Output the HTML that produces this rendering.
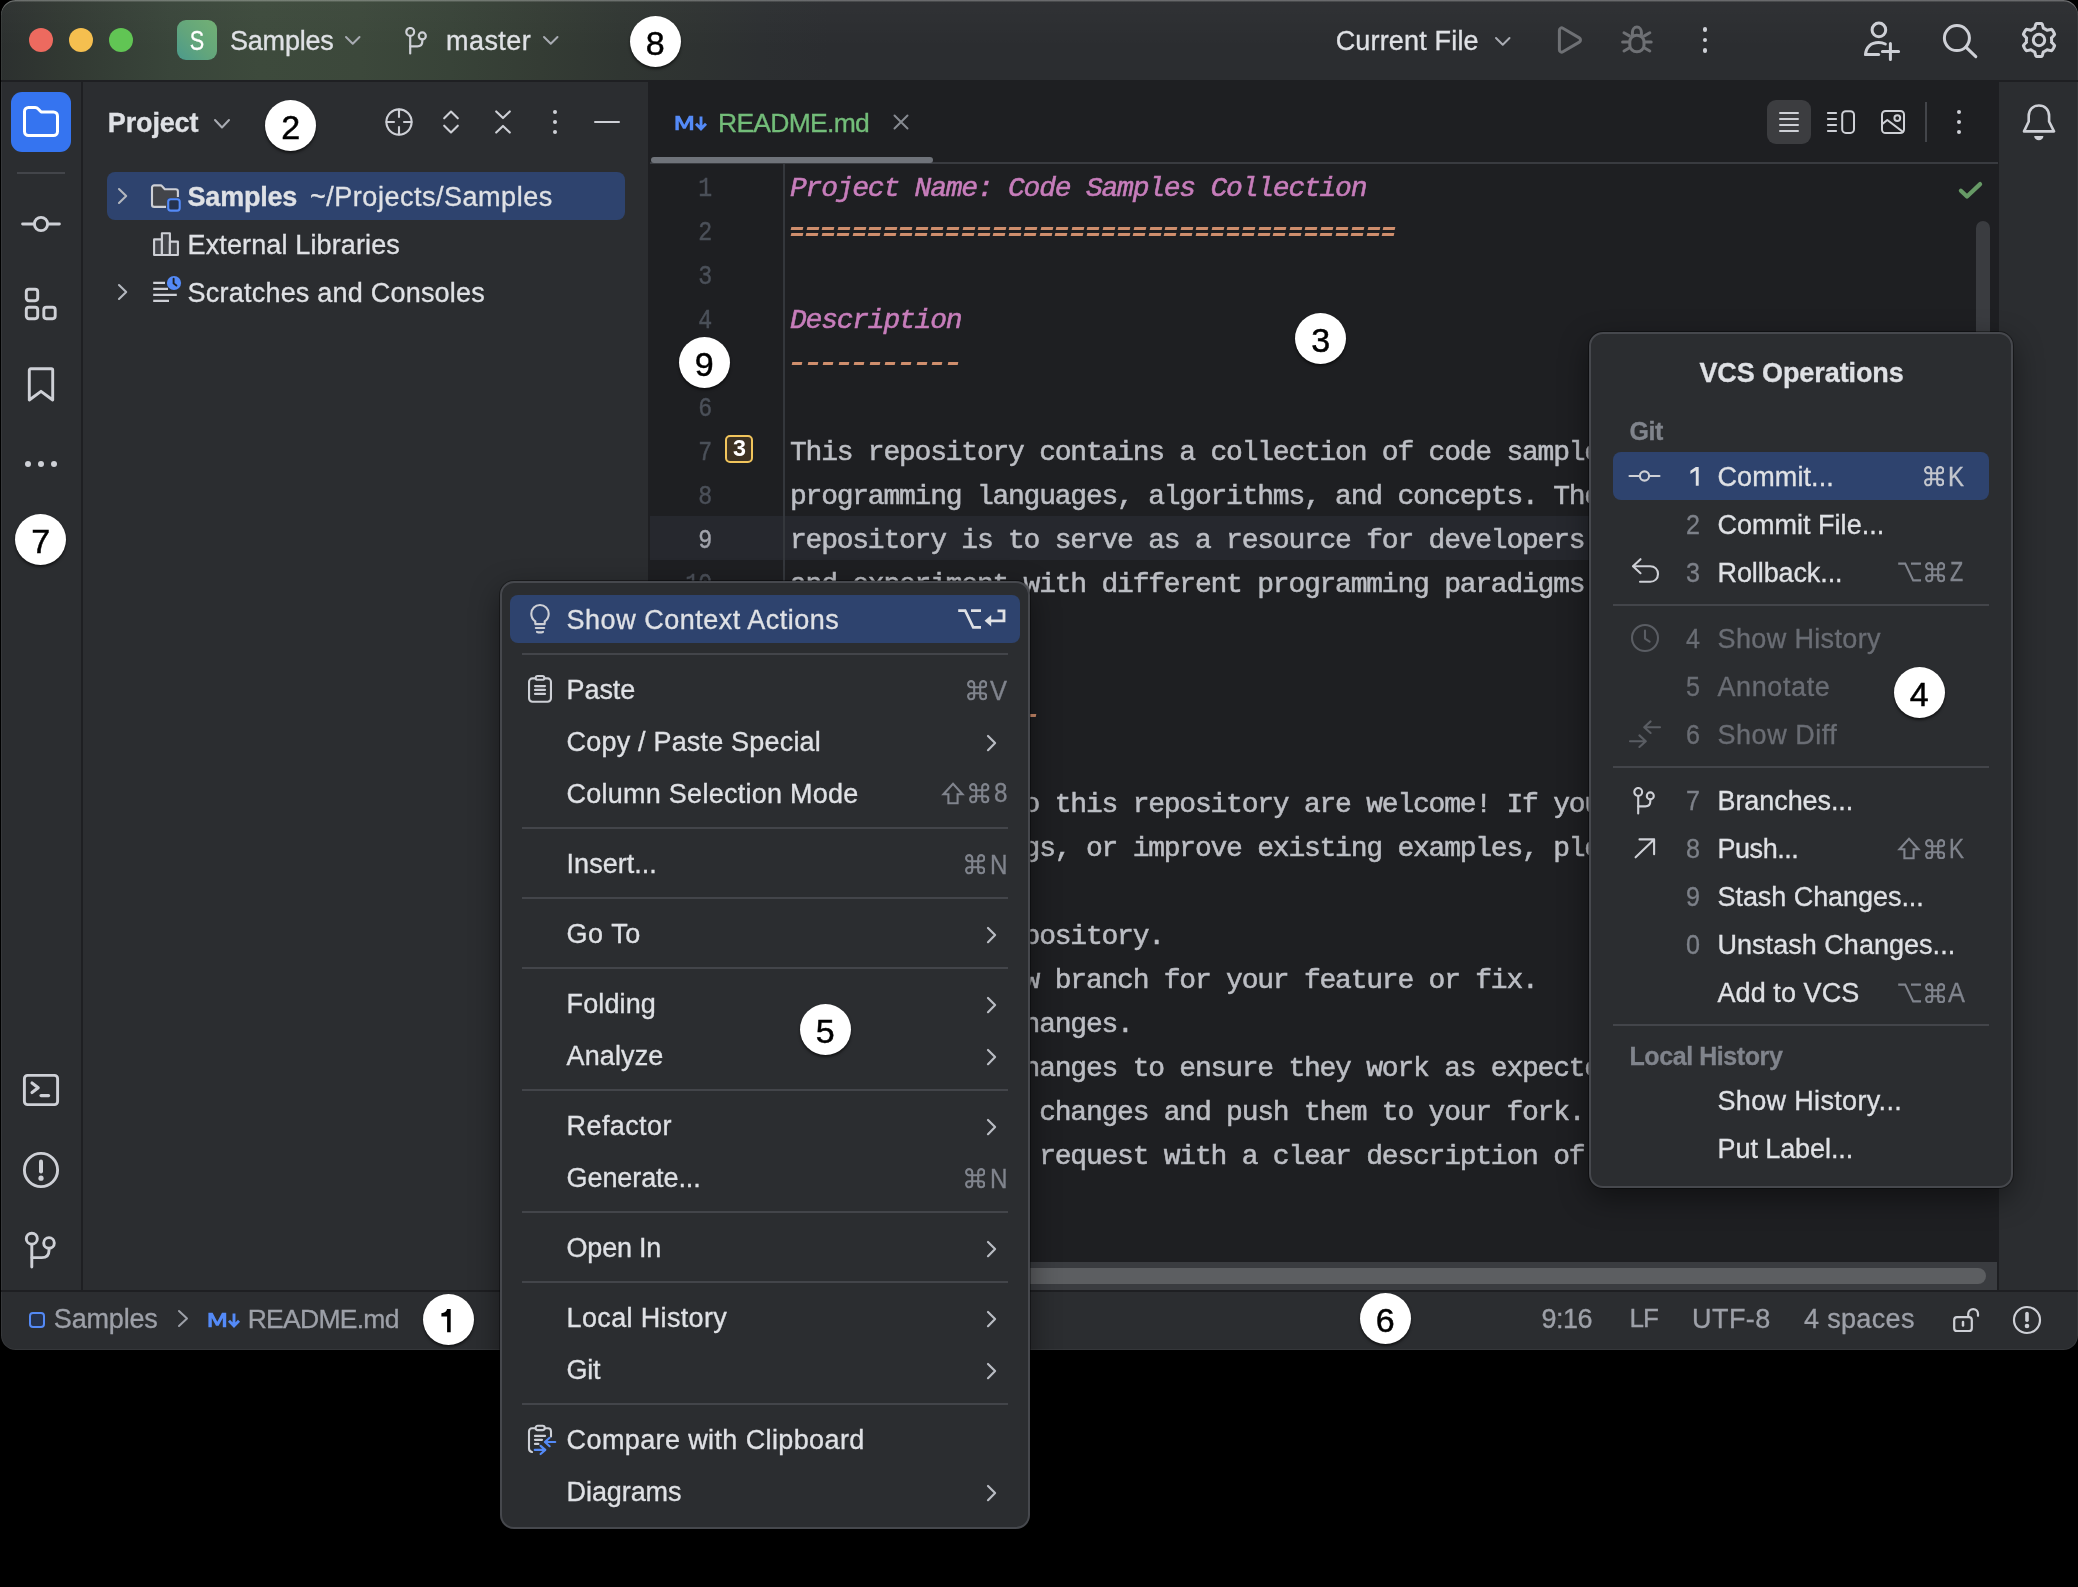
<!DOCTYPE html>
<html lang="en"><head><meta charset="utf-8"><title>Samples – README.md</title>
<style>
html,body{margin:0;padding:0;background:#000;}
body{width:2078px;height:1587px;position:relative;overflow:hidden;font-family:"Liberation Sans",sans-serif;color:#dfe1e5;-webkit-font-smoothing:antialiased;}
#root{position:absolute;left:0;top:0;width:2078px;height:1587px;will-change:transform;}
.a{position:absolute;display:block;}
.t{white-space:pre;}
.s{font-family:"Liberation Sans",sans-serif;}
.m{font-family:"Liberation Mono",monospace;}
.cl{font-size:28px;letter-spacing:-1.228px;height:44px;line-height:44px;-webkit-text-stroke:0.55px currentColor;}
.ln{font-size:27px;letter-spacing:-1px;height:44px;line-height:44px;-webkit-text-stroke:0.45px currentColor;transform:scaleX(0.86);transform-origin:100% 50%;}
.s{-webkit-text-stroke:0.32px currentColor;}
.pop{background:#2b2d30;border:2px solid #46484d;border-radius:14px;box-sizing:border-box;box-shadow:0 10px 30px rgba(0,0,0,0.45),0 0 0 1px rgba(0,0,0,0.35);}
.bd{background:#fff;border-radius:50%;box-shadow:0 2px 3px rgba(0,0,0,0.6);width:51px;height:51px;color:#000;font-size:34px;line-height:54.5px;-webkit-text-stroke:0.5px #000;text-align:center;}
</style></head>
<body>
<div id="root">
<div class="a " style="left:0px;top:0px;width:2078px;height:1350px;background:#2b2d30;"></div>
<div class="a" style="left:0;top:0;width:2078px;height:80px;background:linear-gradient(180deg,rgba(255,255,255,0.025) 0%,rgba(255,255,255,0) 60%),linear-gradient(90deg,#2c302f 0px,#313832 60px,#39453a 170px,#3d4a3c 260px,#3c483b 360px,#384338 450px,#343c34 540px,#303632 620px,#2e3231 700px,#2c2f31 760px,#2b2d30 830px);"></div>
<div class="a" style="left:1px;top:0;width:2077px;height:1350px;border-radius:14.5px;box-shadow:inset 0 1.6px 0 rgba(255,255,255,0.24),inset 0 0 0 1px rgba(255,255,255,0.05);"></div>
<div class="a " style="left:0px;top:80px;width:2078px;height:2px;background:#1e1f22;"></div>
<div class="a " style="left:81px;top:82px;width:2px;height:1208px;background:#1e1f22;"></div>
<div class="a " style="left:648px;top:82px;width:1350px;height:1208px;background:#1e1f22;"></div>
<div class="a " style="left:1997px;top:82px;width:2px;height:1208px;background:#1e1f22;"></div>
<div class="a " style="left:0px;top:1290px;width:2078px;height:2px;background:#1e1f22;"></div>
<div class="a " style="left:29px;top:28px;width:24px;height:24px;background:#ed6a5f;border-radius:12px;"></div>
<div class="a " style="left:69px;top:28px;width:24px;height:24px;background:#f5bf4f;border-radius:12px;"></div>
<div class="a " style="left:109px;top:28px;width:24px;height:24px;background:#61c554;border-radius:12px;"></div>
<div class="a " style="left:177px;top:20px;width:40px;height:40px;background:linear-gradient(45deg,#4b9a8c 0%,#62a57c 45%,#73b074 100%);border-radius:9px;"></div>
<span id="t0" class="a t s" style="left:188.0px;top:21.3px;height:40px;line-height:40px;font-size:27px;color:#ffffff;transform:scaleX(0.8);transform-origin:9px 50%;">S</span>
<span id="t1" class="a t s" style="left:230px;top:21.3px;height:40px;line-height:40px;font-size:27px;color:#dfe1e5;letter-spacing:-0.208px;">Samples</span>
<svg class="a" style="left:344.45px;top:34.9px;" width="17.5" height="10.8" viewBox="0 0 17.5 10.8" fill="none"><path d="M2 2L8.75 8.8L15.5 2" stroke="#a9acb3" stroke-width="2" stroke-linecap="round" stroke-linejoin="round"/></svg>
<svg class="a" style="left:405px;top:27px;" width="24.0" height="28.0" viewBox="0 0 24 28" fill="none"><g stroke="#ced0d6" stroke-width="2.2" stroke-linecap="round" fill="none"><circle cx="5.2" cy="4.9" r="3.9"/><circle cx="17.3" cy="8.9" r="3.5"/><path d="M5.2 9V26.4"/><path d="M17.3 12.6V14.6C17.3 17.8 15.6 19.4 12.3 19.4H5.4"/></g></svg>
<span id="t2" class="a t s" style="left:446px;top:21.3px;height:40px;line-height:40px;font-size:27px;color:#dfe1e5;letter-spacing:0.454px;">master</span>
<svg class="a" style="left:542.45px;top:34.9px;" width="17.5" height="10.8" viewBox="0 0 17.5 10.8" fill="none"><path d="M2 2L8.75 8.8L15.5 2" stroke="#a9acb3" stroke-width="2" stroke-linecap="round" stroke-linejoin="round"/></svg>
<span id="t3" class="a t s" style="left:1335.7px;top:21.3px;height:40px;line-height:40px;font-size:27px;color:#dfe1e5;letter-spacing:0.168px;">Current File</span>
<svg class="a" style="left:1494.15px;top:35.800000000000004px;" width="17.5" height="10.8" viewBox="0 0 17.5 10.8" fill="none"><path d="M2 2L8.75 8.8L15.5 2" stroke="#a9acb3" stroke-width="2" stroke-linecap="round" stroke-linejoin="round"/></svg>
<svg class="a" style="left:1554px;top:22px;" width="34" height="36" viewBox="0 0 34 36" fill="none"><path d="M5.4 8.2C5.4 6.4 7.3 5.3 8.9 6.2L25.3 15.9C26.9 16.8 26.9 19.2 25.3 20.1L8.9 29.8C7.3 30.7 5.4 29.6 5.4 27.8Z" stroke="#6e7074" stroke-width="3" stroke-linejoin="round"/></svg>
<svg class="a" style="left:1619px;top:22px;" width="36" height="36" viewBox="0 0 36 36" fill="none"><g stroke="#6e7074" stroke-width="3" stroke-linecap="round" fill="none"><rect x="10.8" y="13.2" width="14.2" height="16.6" rx="7.1" ry="6.6"/><path d="M13.4 13.2V10.6C13.4 7.4 15.3 5.1 17.9 5.1C20.5 5.1 22.4 7.4 22.4 10.6V13.2"/><path d="M5 10.8L10.4 13.9M3.6 20H10.6M5 29L10.6 25.8M30.8 10.8L25.4 13.9M32.2 20H25.2M30.8 29L25.2 25.8"/></g></svg>
<div class="a " style="left:1702.6px;top:26.8px;width:4.8px;height:4.8px;background:#ced0d6;border-radius:3px;"></div>
<div class="a " style="left:1702.6px;top:37.6px;width:4.8px;height:4.8px;background:#ced0d6;border-radius:3px;"></div>
<div class="a " style="left:1702.6px;top:48.300000000000004px;width:4.8px;height:4.8px;background:#ced0d6;border-radius:3px;"></div>
<svg class="a" style="left:1862px;top:20px;" width="40" height="42" viewBox="0 0 40 42" fill="none"><g stroke="#ced0d6" stroke-width="3" stroke-linecap="round" fill="none"><circle cx="16.9" cy="9.9" r="6.8"/><path d="M3.6 34.5C3.9 27.3 8.8 22.6 16.6 22.6C19.2 22.6 21.4 23.1 23.3 24"/><path d="M3.6 34.5H16.6"/><path d="M28.4 23.6V39.6M20.4 31.5H36.6"/></g></svg>
<svg class="a" style="left:1940px;top:22px;" width="40" height="40" viewBox="0 0 40 40" fill="none"><g stroke="#ced0d6" stroke-width="3" stroke-linecap="round" fill="none"><circle cx="16.9" cy="16.1" r="12.5"/><path d="M25.9 25.2L35.8 34.6"/></g></svg>
<svg class="a" style="left:2018px;top:20px;" width="42" height="40" viewBox="0 0 42 40" fill="none"><g stroke="#ced0d6" stroke-width="3" stroke-linejoin="round" fill="none"><path d="M21.00 3.40 L21.72 3.42 L22.45 3.46 L23.17 3.54 L23.88 3.65 L24.38 4.74 L24.78 5.90 L25.08 7.06 L25.31 8.16 L25.82 8.36 L26.32 8.58 L26.82 8.82 L27.30 9.09 L27.77 9.37 L28.23 9.68 L28.67 10.00 L29.10 10.35 L30.16 10.00 L31.32 9.68 L32.53 9.44 L33.72 9.33 L34.17 9.89 L34.60 10.48 L35.00 11.08 L35.38 11.70 L35.72 12.33 L36.04 12.98 L36.34 13.65 L36.60 14.32 L35.91 15.30 L35.10 16.22 L34.24 17.06 L33.41 17.81 L33.49 18.36 L33.55 18.90 L33.59 19.45 L33.60 20.00 L33.59 20.55 L33.55 21.10 L33.49 21.64 L33.41 22.19 L34.24 22.94 L35.10 23.78 L35.91 24.70 L36.60 25.68 L36.34 26.35 L36.04 27.02 L35.72 27.67 L35.38 28.30 L35.00 28.92 L34.60 29.52 L34.17 30.11 L33.72 30.67 L32.53 30.56 L31.32 30.32 L30.16 30.00 L29.10 29.65 L28.67 30.00 L28.23 30.32 L27.77 30.63 L27.30 30.91 L26.82 31.18 L26.32 31.42 L25.82 31.64 L25.31 31.84 L25.08 32.94 L24.78 34.10 L24.38 35.26 L23.88 36.35 L23.17 36.46 L22.45 36.54 L21.72 36.58 L21.00 36.60 L20.28 36.58 L19.55 36.54 L18.83 36.46 L18.12 36.35 L17.62 35.26 L17.22 34.10 L16.92 32.94 L16.69 31.84 L16.18 31.64 L15.68 31.42 L15.18 31.18 L14.70 30.91 L14.23 30.63 L13.77 30.32 L13.33 30.00 L12.90 29.65 L11.84 30.00 L10.68 30.32 L9.47 30.56 L8.28 30.67 L7.83 30.11 L7.40 29.52 L7.00 28.92 L6.62 28.30 L6.28 27.67 L5.96 27.02 L5.66 26.35 L5.40 25.68 L6.09 24.70 L6.90 23.78 L7.76 22.94 L8.59 22.19 L8.51 21.64 L8.45 21.10 L8.41 20.55 L8.40 20.00 L8.41 19.45 L8.45 18.90 L8.51 18.36 L8.59 17.81 L7.76 17.06 L6.90 16.22 L6.09 15.30 L5.40 14.32 L5.66 13.65 L5.96 12.98 L6.28 12.33 L6.62 11.70 L7.00 11.08 L7.40 10.48 L7.83 9.89 L8.28 9.33 L9.47 9.44 L10.68 9.68 L11.84 10.00 L12.90 10.35 L13.33 10.00 L13.77 9.68 L14.23 9.37 L14.70 9.09 L15.18 8.82 L15.68 8.58 L16.18 8.36 L16.69 8.16 L16.92 7.06 L17.22 5.90 L17.62 4.74 L18.12 3.65 L18.83 3.54 L19.55 3.46 L20.28 3.42Z"/><circle cx="21" cy="20" r="5.7"/></g></svg>
<div class="a " style="left:11px;top:92px;width:60px;height:60px;background:#3574f0;border-radius:11px;"></div>
<svg class="a" style="left:21px;top:104px;" width="40" height="36" viewBox="0 0 40 36" fill="none"><path d="M3.5 7.5C3.5 5.3 5.3 3.5 7.5 3.5H14.2C15.3 3.5 16.3 3.9 17 4.7L20.2 8H32.5C34.7 8 36.5 9.8 36.5 12V27.5C36.5 29.7 34.7 31.5 32.5 31.5H7.5C5.3 31.5 3.5 29.7 3.5 27.5Z" stroke="#ffffff" stroke-width="3" stroke-linejoin="round"/></svg>
<div class="a " style="left:17px;top:172px;width:48px;height:2px;background:#43454a;"></div>
<svg class="a" style="left:18px;top:212px;" width="46" height="24" viewBox="0 0 46 24" fill="none"><g stroke="#ced0d6" stroke-width="2.9" stroke-linecap="round" fill="none"><circle cx="23" cy="12" r="6.6"/><path d="M4.6 12H16M30 12H41.4"/></g></svg>
<svg class="a" style="left:22px;top:286px;" width="38" height="36" viewBox="0 0 38 36" fill="none"><g stroke="#ced0d6" stroke-width="2.9" fill="none"><rect x="4.3" y="3.3" width="11.4" height="11.4" rx="2.6"/><rect x="4.3" y="21.3" width="11.4" height="11.4" rx="2.6"/><rect x="21.8" y="21.3" width="11.4" height="11.4" rx="2.6"/></g></svg>
<svg class="a" style="left:24px;top:365px;" width="34" height="40" viewBox="0 0 34 40" fill="none"><path d="M5.3 5.2C5.3 4.4 5.9 3.8 6.7 3.8H27.3C28.1 3.8 28.7 4.4 28.7 5.2V35L17 26.3L5.3 35Z" stroke="#ced0d6" stroke-width="2.9" stroke-linejoin="round" fill="none"/></svg>
<div class="a " style="left:25px;top:461px;width:6px;height:6px;background:#ced0d6;border-radius:3px;"></div>
<div class="a " style="left:38px;top:461px;width:6px;height:6px;background:#ced0d6;border-radius:3px;"></div>
<div class="a " style="left:51px;top:461px;width:6px;height:6px;background:#ced0d6;border-radius:3px;"></div>
<svg class="a" style="left:20px;top:1070px;" width="42" height="40" viewBox="0 0 42 40" fill="none"><g stroke="#ced0d6" stroke-width="2.9" stroke-linecap="round" stroke-linejoin="round" fill="none"><rect x="4.4" y="5.4" width="33.2" height="29.2" rx="3.2"/><path d="M12 13L18.2 17.8L12 22.6" stroke-width="3.1"/><path d="M21 25.6H28.6" stroke-width="3.1"/></g></svg>
<svg class="a" style="left:20px;top:1149px;" width="42" height="42" viewBox="0 0 42 42" fill="none"><g stroke="#ced0d6" stroke-width="2.9" stroke-linecap="round" fill="none"><circle cx="21" cy="21" r="16.6"/><path d="M21 12.6V22.4" stroke-width="4"/></g><circle cx="21" cy="29.2" r="2.6" fill="#ced0d6"/></svg>
<svg class="a" style="left:22px;top:1230px;" width="38" height="40" viewBox="0 0 38 40" fill="none"><g stroke="#ced0d6" stroke-width="2.9" stroke-linecap="round" fill="none"><circle cx="9.8" cy="8.7" r="5.5"/><circle cx="27" cy="12.9" r="5.3"/><path d="M9.8 14.4V37"/><path d="M27 18.4V20.4C27 25 24.4 27.6 19.8 27.6H10"/></g></svg>
<span id="t4" class="a t s" style="left:107.8px;top:103.0px;height:40px;line-height:40px;font-size:27px;color:#dfe1e5;font-weight:700;letter-spacing:-0.141px;">Project</span>
<svg class="a" style="left:212.5px;top:118.45px;" width="18" height="11.5" viewBox="0 0 18 11.5" fill="none"><path d="M2 2L9.0 9.5L16 2" stroke="#a9acb3" stroke-width="2" stroke-linecap="round" stroke-linejoin="round"/></svg>
<svg class="a" style="left:383px;top:106px;" width="32" height="32" viewBox="0 0 32 32" fill="none"><g stroke="#ced0d6" stroke-width="2.1" stroke-linecap="round" fill="none"><circle cx="16" cy="16" r="12.6"/><path d="M16 3.5V11M16 21V28.5M3.5 16H11M21 16H28.5"/></g></svg>
<svg class="a" style="left:438px;top:106px;" width="26" height="32" viewBox="0 0 26 32" fill="none"><g stroke="#ced0d6" stroke-width="2.1" stroke-linecap="round" stroke-linejoin="round" fill="none"><path d="M6.2 12.3L13 5.6L19.8 12.3"/><path d="M6.2 19.7L13 26.4L19.8 19.7"/></g></svg>
<svg class="a" style="left:490px;top:106px;" width="26" height="32" viewBox="0 0 26 32" fill="none"><g stroke="#ced0d6" stroke-width="2.1" stroke-linecap="round" stroke-linejoin="round" fill="none"><path d="M6.2 5.4L13 12.1L19.8 5.4"/><path d="M6.2 26.6L13 19.9L19.8 26.6"/></g></svg>
<div class="a " style="left:552.5px;top:109.8px;width:4.4px;height:4.4px;background:#ced0d6;border-radius:3px;"></div>
<div class="a " style="left:552.5px;top:119.8px;width:4.4px;height:4.4px;background:#ced0d6;border-radius:3px;"></div>
<div class="a " style="left:552.5px;top:129.8px;width:4.4px;height:4.4px;background:#ced0d6;border-radius:3px;"></div>
<div class="a " style="left:594px;top:121px;width:26px;height:2.2px;background:#ced0d6;border-radius:1px;"></div>
<div class="a " style="left:107px;top:172px;width:518px;height:48px;background:#2e436e;border-radius:8px;"></div>
<svg class="a" style="left:116.9px;top:186.9px;" width="11.2" height="18" viewBox="0 0 11.2 18" fill="none"><path d="M2 2L9.2 9.0L2 16" stroke="#b4b8bf" stroke-width="2.1" stroke-linecap="round" stroke-linejoin="round"/></svg>
<svg class="a" style="left:148px;top:182px;" width="36" height="32" viewBox="0 0 36 32" fill="none"><path d="M4 5.6C4 4.4 5 3.4 6.2 3.4H12.4C13.1 3.4 13.7 3.7 14.1 4.2L16.8 7.2H27.7C28.9 7.2 29.9 8.2 29.9 9.4V16H19V24.9H6.2C5 24.9 4 23.9 4 22.7Z" fill="#43454a"/><path d="M29.9 15V9.4C29.9 8.2 28.9 7.2 27.7 7.2H16.8L14.1 4.2C13.7 3.7 13.1 3.4 12.4 3.4H6.2C5 3.4 4 4.4 4 5.6V22.7C4 23.9 5 24.9 6.2 24.9H18" stroke="#ced0d6" stroke-width="2.1" stroke-linejoin="round" fill="none"/><rect x="20.2" y="17.2" width="11.5" height="11.4" rx="2.6" fill="#25324d" stroke="#548af7" stroke-width="2.1"/></svg>
<span id="t5" class="a t s" style="left:187.6px;top:177.0px;height:40px;line-height:40px;font-size:27px;color:#dfe1e5;font-weight:700;letter-spacing:-0.244px;">Samples</span>
<span id="t6" class="a t s" style="left:310px;top:177.0px;height:40px;line-height:40px;font-size:27px;color:#dfe1e5;letter-spacing:0.520px;">~/Projects/Samples</span>
<svg class="a" style="left:150px;top:230px;" width="32" height="30" viewBox="0 0 32 30" fill="none"><g stroke="#ced0d6" stroke-width="2.1" stroke-linejoin="round" fill="#43454a"><rect x="4.1" y="9.4" width="7.8" height="15.6"/><rect x="11.9" y="3.2" width="8" height="21.8"/><rect x="19.9" y="11.6" width="8" height="13.4"/></g></svg>
<span id="t7" class="a t s" style="left:187.6px;top:225.0px;height:40px;line-height:40px;font-size:27px;color:#dfe1e5;letter-spacing:0.124px;">External Libraries</span>
<svg class="a" style="left:116.9px;top:282.9px;" width="11.2" height="18" viewBox="0 0 11.2 18" fill="none"><path d="M2 2L9.2 9.0L2 16" stroke="#b4b8bf" stroke-width="2.1" stroke-linecap="round" stroke-linejoin="round"/></svg>
<svg class="a" style="left:150px;top:274px;" width="34" height="32" viewBox="0 0 34 32" fill="none"><g stroke="#ced0d6" stroke-width="2.2" fill="none"><path d="M3.2 8.8H15M3.2 14.9H18M3.2 20.9H26.8M3.2 26.9H19"/></g><circle cx="24" cy="9" r="7.1" fill="#548af7"/><path d="M23.6 4.8V9.4L26.4 11.6" stroke="#1e1f22" stroke-width="1.9" stroke-linecap="round" fill="none"/></svg>
<span id="t8" class="a t s" style="left:187.6px;top:273.0px;height:40px;line-height:40px;font-size:27px;color:#dfe1e5;letter-spacing:0.216px;">Scratches and Consoles</span>
<svg class="a" style="left:675px;top:115.0px;" width="33.0" height="16.0" viewBox="0 0 33 16" fill="none"><path d="M0.4 15.2V0.8H4.6L9.3 9.8L14 0.8H18.2V15.2H14.8V5.9L10.6 13.7H8L3.8 5.9V15.2Z" fill="#548af7"/><path d="M26 1.6V13.6M21 8.8L26 13.9L31 8.8" stroke="#548af7" stroke-width="2.9" stroke-linecap="butt" stroke-linejoin="miter" fill="none"/></svg>
<span id="t9" class="a t s" style="left:718px;top:102.5px;height:40px;line-height:40px;font-size:26.5px;color:#73bd79;letter-spacing:-0.720px;">README.md</span>
<svg class="a" style="left:891px;top:112px;" width="20" height="20" viewBox="0 0 20 20" fill="none"><path d="M3.5 3.5L16.5 16.5M16.5 3.5L3.5 16.5" stroke="#868a91" stroke-width="2" stroke-linecap="round"/></svg>
<div class="a " style="left:650px;top:162px;width:1348px;height:2px;background:#393b40;"></div>
<div class="a " style="left:651px;top:157px;width:282px;height:6px;background:#6f737a;border-radius:3px;"></div>
<div class="a " style="left:1767px;top:100px;width:44px;height:44px;background:#3c3d40;border-radius:9px;"></div>
<svg class="a" style="left:1773px;top:106px;" width="32" height="32" viewBox="0 0 32 32" fill="none"><path d="M7 7H25M7 13H25M7 19H25M7 25H25" stroke="#ced0d6" stroke-width="2" stroke-linecap="round"/></svg>
<svg class="a" style="left:1825px;top:106px;" width="32" height="32" viewBox="0 0 32 32" fill="none"><g stroke="#ced0d6" stroke-width="2" stroke-linecap="round" fill="none"><path d="M2.9 7H11.1M2.9 13H11.1M2.9 19H11.1M2.9 25H11.1"/><rect x="17.2" y="5.2" width="11.8" height="21.7" rx="3.6"/></g></svg>
<svg class="a" style="left:1877px;top:106px;" width="32" height="32" viewBox="0 0 32 32" fill="none"><g stroke="#ced0d6" stroke-width="2" stroke-linejoin="round" fill="none"><rect x="5" y="5" width="22" height="22" rx="3.6"/><circle cx="20.3" cy="12.1" r="2.9"/><path d="M5.4 18L10.3 14L26.6 26.4"/></g></svg>
<div class="a " style="left:1925px;top:102px;width:2px;height:40px;background:#43454a;"></div>
<div class="a " style="left:1956.8px;top:109.6px;width:4.4px;height:4.4px;background:#ced0d6;border-radius:3px;"></div>
<div class="a " style="left:1956.8px;top:119.8px;width:4.4px;height:4.4px;background:#ced0d6;border-radius:3px;"></div>
<div class="a " style="left:1956.8px;top:129.9px;width:4.4px;height:4.4px;background:#ced0d6;border-radius:3px;"></div>
<svg class="a" style="left:2018px;top:100px;" width="42" height="44" viewBox="0 0 42 44" fill="none"><g stroke="#ced0d6" stroke-width="2.6" stroke-linecap="round" stroke-linejoin="round" fill="none"><path d="M6 31.4L10.7 21.5V16C10.7 9.6 15 5.5 20.9 5.5C26.8 5.5 31.1 9.6 31.1 16V21.5L36 31.4Z"/></g><path d="M16.2 36H25.4A4.6 4.3 0 0 1 16.2 36Z" fill="#ced0d6"/></svg>
<div class="a " style="left:650px;top:516px;width:1348px;height:44px;background:#26282e;"></div>
<div class="a " style="left:783px;top:164px;width:2px;height:1098px;background:#34373c;"></div>
<div class="a" style="left:650px;top:164px;width:1348px;height:1098px;overflow:hidden;">
<span class="a t m ln" style="right:1287px;top:2.5px;color:#4b5059;">1</span>
<span class="a t m cl" style="left:140px;top:2.5px;color:#c77dbb;font-style:italic;">Project Name: Code Samples Collection</span>
<span class="a t m ln" style="right:1287px;top:46.5px;color:#4b5059;">2</span>
<i class="a" style="left:141.30px;top:62.80px;width:11.6px;height:3px;background:#cf8e6d;transform:skewX(-12deg);"></i>
<i class="a" style="left:156.88px;top:62.80px;width:11.6px;height:3px;background:#cf8e6d;transform:skewX(-12deg);"></i>
<i class="a" style="left:172.45px;top:62.80px;width:11.6px;height:3px;background:#cf8e6d;transform:skewX(-12deg);"></i>
<i class="a" style="left:188.03px;top:62.80px;width:11.6px;height:3px;background:#cf8e6d;transform:skewX(-12deg);"></i>
<i class="a" style="left:203.60px;top:62.80px;width:11.6px;height:3px;background:#cf8e6d;transform:skewX(-12deg);"></i>
<i class="a" style="left:219.18px;top:62.80px;width:11.6px;height:3px;background:#cf8e6d;transform:skewX(-12deg);"></i>
<i class="a" style="left:234.75px;top:62.80px;width:11.6px;height:3px;background:#cf8e6d;transform:skewX(-12deg);"></i>
<i class="a" style="left:250.32px;top:62.80px;width:11.6px;height:3px;background:#cf8e6d;transform:skewX(-12deg);"></i>
<i class="a" style="left:265.90px;top:62.80px;width:11.6px;height:3px;background:#cf8e6d;transform:skewX(-12deg);"></i>
<i class="a" style="left:281.48px;top:62.80px;width:11.6px;height:3px;background:#cf8e6d;transform:skewX(-12deg);"></i>
<i class="a" style="left:297.05px;top:62.80px;width:11.6px;height:3px;background:#cf8e6d;transform:skewX(-12deg);"></i>
<i class="a" style="left:312.62px;top:62.80px;width:11.6px;height:3px;background:#cf8e6d;transform:skewX(-12deg);"></i>
<i class="a" style="left:328.20px;top:62.80px;width:11.6px;height:3px;background:#cf8e6d;transform:skewX(-12deg);"></i>
<i class="a" style="left:343.77px;top:62.80px;width:11.6px;height:3px;background:#cf8e6d;transform:skewX(-12deg);"></i>
<i class="a" style="left:359.35px;top:62.80px;width:11.6px;height:3px;background:#cf8e6d;transform:skewX(-12deg);"></i>
<i class="a" style="left:374.93px;top:62.80px;width:11.6px;height:3px;background:#cf8e6d;transform:skewX(-12deg);"></i>
<i class="a" style="left:390.50px;top:62.80px;width:11.6px;height:3px;background:#cf8e6d;transform:skewX(-12deg);"></i>
<i class="a" style="left:406.07px;top:62.80px;width:11.6px;height:3px;background:#cf8e6d;transform:skewX(-12deg);"></i>
<i class="a" style="left:421.65px;top:62.80px;width:11.6px;height:3px;background:#cf8e6d;transform:skewX(-12deg);"></i>
<i class="a" style="left:437.23px;top:62.80px;width:11.6px;height:3px;background:#cf8e6d;transform:skewX(-12deg);"></i>
<i class="a" style="left:452.80px;top:62.80px;width:11.6px;height:3px;background:#cf8e6d;transform:skewX(-12deg);"></i>
<i class="a" style="left:468.38px;top:62.80px;width:11.6px;height:3px;background:#cf8e6d;transform:skewX(-12deg);"></i>
<i class="a" style="left:483.95px;top:62.80px;width:11.6px;height:3px;background:#cf8e6d;transform:skewX(-12deg);"></i>
<i class="a" style="left:499.52px;top:62.80px;width:11.6px;height:3px;background:#cf8e6d;transform:skewX(-12deg);"></i>
<i class="a" style="left:515.10px;top:62.80px;width:11.6px;height:3px;background:#cf8e6d;transform:skewX(-12deg);"></i>
<i class="a" style="left:530.67px;top:62.80px;width:11.6px;height:3px;background:#cf8e6d;transform:skewX(-12deg);"></i>
<i class="a" style="left:546.25px;top:62.80px;width:11.6px;height:3px;background:#cf8e6d;transform:skewX(-12deg);"></i>
<i class="a" style="left:561.83px;top:62.80px;width:11.6px;height:3px;background:#cf8e6d;transform:skewX(-12deg);"></i>
<i class="a" style="left:577.40px;top:62.80px;width:11.6px;height:3px;background:#cf8e6d;transform:skewX(-12deg);"></i>
<i class="a" style="left:592.97px;top:62.80px;width:11.6px;height:3px;background:#cf8e6d;transform:skewX(-12deg);"></i>
<i class="a" style="left:608.55px;top:62.80px;width:11.6px;height:3px;background:#cf8e6d;transform:skewX(-12deg);"></i>
<i class="a" style="left:624.12px;top:62.80px;width:11.6px;height:3px;background:#cf8e6d;transform:skewX(-12deg);"></i>
<i class="a" style="left:639.70px;top:62.80px;width:11.6px;height:3px;background:#cf8e6d;transform:skewX(-12deg);"></i>
<i class="a" style="left:655.28px;top:62.80px;width:11.6px;height:3px;background:#cf8e6d;transform:skewX(-12deg);"></i>
<i class="a" style="left:670.85px;top:62.80px;width:11.6px;height:3px;background:#cf8e6d;transform:skewX(-12deg);"></i>
<i class="a" style="left:686.42px;top:62.80px;width:11.6px;height:3px;background:#cf8e6d;transform:skewX(-12deg);"></i>
<i class="a" style="left:702.00px;top:62.80px;width:11.6px;height:3px;background:#cf8e6d;transform:skewX(-12deg);"></i>
<i class="a" style="left:717.58px;top:62.80px;width:11.6px;height:3px;background:#cf8e6d;transform:skewX(-12deg);"></i>
<i class="a" style="left:733.15px;top:62.80px;width:11.6px;height:3px;background:#cf8e6d;transform:skewX(-12deg);"></i>
<i class="a" style="left:140.60px;top:68.90px;width:11.6px;height:3px;background:#cf8e6d;transform:skewX(-12deg);"></i>
<i class="a" style="left:156.17px;top:68.90px;width:11.6px;height:3px;background:#cf8e6d;transform:skewX(-12deg);"></i>
<i class="a" style="left:171.75px;top:68.90px;width:11.6px;height:3px;background:#cf8e6d;transform:skewX(-12deg);"></i>
<i class="a" style="left:187.32px;top:68.90px;width:11.6px;height:3px;background:#cf8e6d;transform:skewX(-12deg);"></i>
<i class="a" style="left:202.90px;top:68.90px;width:11.6px;height:3px;background:#cf8e6d;transform:skewX(-12deg);"></i>
<i class="a" style="left:218.47px;top:68.90px;width:11.6px;height:3px;background:#cf8e6d;transform:skewX(-12deg);"></i>
<i class="a" style="left:234.05px;top:68.90px;width:11.6px;height:3px;background:#cf8e6d;transform:skewX(-12deg);"></i>
<i class="a" style="left:249.62px;top:68.90px;width:11.6px;height:3px;background:#cf8e6d;transform:skewX(-12deg);"></i>
<i class="a" style="left:265.20px;top:68.90px;width:11.6px;height:3px;background:#cf8e6d;transform:skewX(-12deg);"></i>
<i class="a" style="left:280.77px;top:68.90px;width:11.6px;height:3px;background:#cf8e6d;transform:skewX(-12deg);"></i>
<i class="a" style="left:296.35px;top:68.90px;width:11.6px;height:3px;background:#cf8e6d;transform:skewX(-12deg);"></i>
<i class="a" style="left:311.92px;top:68.90px;width:11.6px;height:3px;background:#cf8e6d;transform:skewX(-12deg);"></i>
<i class="a" style="left:327.50px;top:68.90px;width:11.6px;height:3px;background:#cf8e6d;transform:skewX(-12deg);"></i>
<i class="a" style="left:343.07px;top:68.90px;width:11.6px;height:3px;background:#cf8e6d;transform:skewX(-12deg);"></i>
<i class="a" style="left:358.65px;top:68.90px;width:11.6px;height:3px;background:#cf8e6d;transform:skewX(-12deg);"></i>
<i class="a" style="left:374.23px;top:68.90px;width:11.6px;height:3px;background:#cf8e6d;transform:skewX(-12deg);"></i>
<i class="a" style="left:389.80px;top:68.90px;width:11.6px;height:3px;background:#cf8e6d;transform:skewX(-12deg);"></i>
<i class="a" style="left:405.38px;top:68.90px;width:11.6px;height:3px;background:#cf8e6d;transform:skewX(-12deg);"></i>
<i class="a" style="left:420.95px;top:68.90px;width:11.6px;height:3px;background:#cf8e6d;transform:skewX(-12deg);"></i>
<i class="a" style="left:436.52px;top:68.90px;width:11.6px;height:3px;background:#cf8e6d;transform:skewX(-12deg);"></i>
<i class="a" style="left:452.10px;top:68.90px;width:11.6px;height:3px;background:#cf8e6d;transform:skewX(-12deg);"></i>
<i class="a" style="left:467.67px;top:68.90px;width:11.6px;height:3px;background:#cf8e6d;transform:skewX(-12deg);"></i>
<i class="a" style="left:483.25px;top:68.90px;width:11.6px;height:3px;background:#cf8e6d;transform:skewX(-12deg);"></i>
<i class="a" style="left:498.82px;top:68.90px;width:11.6px;height:3px;background:#cf8e6d;transform:skewX(-12deg);"></i>
<i class="a" style="left:514.40px;top:68.90px;width:11.6px;height:3px;background:#cf8e6d;transform:skewX(-12deg);"></i>
<i class="a" style="left:529.98px;top:68.90px;width:11.6px;height:3px;background:#cf8e6d;transform:skewX(-12deg);"></i>
<i class="a" style="left:545.55px;top:68.90px;width:11.6px;height:3px;background:#cf8e6d;transform:skewX(-12deg);"></i>
<i class="a" style="left:561.12px;top:68.90px;width:11.6px;height:3px;background:#cf8e6d;transform:skewX(-12deg);"></i>
<i class="a" style="left:576.70px;top:68.90px;width:11.6px;height:3px;background:#cf8e6d;transform:skewX(-12deg);"></i>
<i class="a" style="left:592.27px;top:68.90px;width:11.6px;height:3px;background:#cf8e6d;transform:skewX(-12deg);"></i>
<i class="a" style="left:607.85px;top:68.90px;width:11.6px;height:3px;background:#cf8e6d;transform:skewX(-12deg);"></i>
<i class="a" style="left:623.42px;top:68.90px;width:11.6px;height:3px;background:#cf8e6d;transform:skewX(-12deg);"></i>
<i class="a" style="left:639.00px;top:68.90px;width:11.6px;height:3px;background:#cf8e6d;transform:skewX(-12deg);"></i>
<i class="a" style="left:654.58px;top:68.90px;width:11.6px;height:3px;background:#cf8e6d;transform:skewX(-12deg);"></i>
<i class="a" style="left:670.15px;top:68.90px;width:11.6px;height:3px;background:#cf8e6d;transform:skewX(-12deg);"></i>
<i class="a" style="left:685.73px;top:68.90px;width:11.6px;height:3px;background:#cf8e6d;transform:skewX(-12deg);"></i>
<i class="a" style="left:701.30px;top:68.90px;width:11.6px;height:3px;background:#cf8e6d;transform:skewX(-12deg);"></i>
<i class="a" style="left:716.88px;top:68.90px;width:11.6px;height:3px;background:#cf8e6d;transform:skewX(-12deg);"></i>
<i class="a" style="left:732.45px;top:68.90px;width:11.6px;height:3px;background:#cf8e6d;transform:skewX(-12deg);"></i>
<span class="a t m ln" style="right:1287px;top:90.5px;color:#4b5059;">3</span>
<span class="a t m ln" style="right:1287px;top:134.5px;color:#4b5059;">4</span>
<span class="a t m cl" style="left:140px;top:134.5px;color:#c77dbb;font-style:italic;">Description</span>
<span class="a t m ln" style="right:1287px;top:178.5px;color:#4b5059;">5</span>
<i class="a" style="left:142.00px;top:198.00px;width:9.8px;height:3.2px;background:#cf8e6d;transform:skewX(-12deg);"></i>
<i class="a" style="left:157.57px;top:198.00px;width:9.8px;height:3.2px;background:#cf8e6d;transform:skewX(-12deg);"></i>
<i class="a" style="left:173.15px;top:198.00px;width:9.8px;height:3.2px;background:#cf8e6d;transform:skewX(-12deg);"></i>
<i class="a" style="left:188.72px;top:198.00px;width:9.8px;height:3.2px;background:#cf8e6d;transform:skewX(-12deg);"></i>
<i class="a" style="left:204.30px;top:198.00px;width:9.8px;height:3.2px;background:#cf8e6d;transform:skewX(-12deg);"></i>
<i class="a" style="left:219.88px;top:198.00px;width:9.8px;height:3.2px;background:#cf8e6d;transform:skewX(-12deg);"></i>
<i class="a" style="left:235.45px;top:198.00px;width:9.8px;height:3.2px;background:#cf8e6d;transform:skewX(-12deg);"></i>
<i class="a" style="left:251.02px;top:198.00px;width:9.8px;height:3.2px;background:#cf8e6d;transform:skewX(-12deg);"></i>
<i class="a" style="left:266.60px;top:198.00px;width:9.8px;height:3.2px;background:#cf8e6d;transform:skewX(-12deg);"></i>
<i class="a" style="left:282.17px;top:198.00px;width:9.8px;height:3.2px;background:#cf8e6d;transform:skewX(-12deg);"></i>
<i class="a" style="left:297.75px;top:198.00px;width:9.8px;height:3.2px;background:#cf8e6d;transform:skewX(-12deg);"></i>
<span class="a t m ln" style="right:1287px;top:222.5px;color:#4b5059;">6</span>
<span class="a t m ln" style="right:1287px;top:266.5px;color:#4b5059;">7</span>
<span class="a t m cl" style="left:140px;top:266.5px;color:#bcbec4;">This repository contains a collection of code samples in various</span>
<span class="a t m ln" style="right:1287px;top:310.5px;color:#4b5059;">8</span>
<span class="a t m cl" style="left:140px;top:310.5px;color:#bcbec4;">programming languages, algorithms, and concepts. The goal of this</span>
<span class="a t m ln" style="right:1287px;top:354.5px;color:#a1a3ab;">9</span>
<span class="a t m cl" style="left:140px;top:354.5px;color:#bcbec4;">repository is to serve as a resource for developers to learn, explore</span>
<span class="a t m ln" style="right:1287px;top:398.5px;color:#4b5059;">10</span>
<span class="a t m cl" style="left:140px;top:398.5px;color:#bcbec4;">and experiment with different programming paradigms and techniques.</span>
<span class="a t m ln" style="right:1287px;top:442.5px;color:#4b5059;">11</span>
<span class="a t m ln" style="right:1287px;top:486.5px;color:#4b5059;">12</span>
<span class="a t m cl" style="left:140px;top:486.5px;color:#c77dbb;font-style:italic;">Contributing</span>
<span class="a t m ln" style="right:1287px;top:530.5px;color:#4b5059;">13</span>
<i class="a" style="left:142.00px;top:550.00px;width:9.8px;height:3.2px;background:#cf8e6d;transform:skewX(-12deg);"></i>
<i class="a" style="left:157.57px;top:550.00px;width:9.8px;height:3.2px;background:#cf8e6d;transform:skewX(-12deg);"></i>
<i class="a" style="left:173.15px;top:550.00px;width:9.8px;height:3.2px;background:#cf8e6d;transform:skewX(-12deg);"></i>
<i class="a" style="left:188.72px;top:550.00px;width:9.8px;height:3.2px;background:#cf8e6d;transform:skewX(-12deg);"></i>
<i class="a" style="left:204.30px;top:550.00px;width:9.8px;height:3.2px;background:#cf8e6d;transform:skewX(-12deg);"></i>
<i class="a" style="left:219.88px;top:550.00px;width:9.8px;height:3.2px;background:#cf8e6d;transform:skewX(-12deg);"></i>
<i class="a" style="left:235.45px;top:550.00px;width:9.8px;height:3.2px;background:#cf8e6d;transform:skewX(-12deg);"></i>
<i class="a" style="left:251.02px;top:550.00px;width:9.8px;height:3.2px;background:#cf8e6d;transform:skewX(-12deg);"></i>
<i class="a" style="left:266.60px;top:550.00px;width:9.8px;height:3.2px;background:#cf8e6d;transform:skewX(-12deg);"></i>
<i class="a" style="left:282.17px;top:550.00px;width:9.8px;height:3.2px;background:#cf8e6d;transform:skewX(-12deg);"></i>
<i class="a" style="left:297.75px;top:550.00px;width:9.8px;height:3.2px;background:#cf8e6d;transform:skewX(-12deg);"></i>
<i class="a" style="left:313.32px;top:550.00px;width:9.8px;height:3.2px;background:#cf8e6d;transform:skewX(-12deg);"></i>
<i class="a" style="left:328.90px;top:550.00px;width:9.8px;height:3.2px;background:#cf8e6d;transform:skewX(-12deg);"></i>
<i class="a" style="left:344.48px;top:550.00px;width:9.8px;height:3.2px;background:#cf8e6d;transform:skewX(-12deg);"></i>
<i class="a" style="left:360.05px;top:550.00px;width:9.8px;height:3.2px;background:#cf8e6d;transform:skewX(-12deg);"></i>
<i class="a" style="left:375.62px;top:550.00px;width:9.8px;height:3.2px;background:#cf8e6d;transform:skewX(-12deg);"></i>
<span class="a t m ln" style="right:1287px;top:574.5px;color:#4b5059;">14</span>
<span class="a t m ln" style="right:1287px;top:618.5px;color:#4b5059;">15</span>
<span class="a t m cl" style="left:140px;top:618.5px;color:#bcbec4;">Contributions to this repository are welcome! If you&#x27;d like to add new</span>
<span class="a t m ln" style="right:1287px;top:662.5px;color:#4b5059;">16</span>
<span class="a t m cl" style="left:140px;top:662.5px;color:#bcbec4;">samples, fix bugs, or improve existing examples, please follow these</span>
<span class="a t m ln" style="right:1287px;top:706.5px;color:#4b5059;">17</span>
<span class="a t m ln" style="right:1287px;top:750.5px;color:#4b5059;">18</span>
<span class="a t m cl" style="left:140px;top:750.5px;color:#bcbec4;"> 1. Fork the repository.</span>
<span class="a t m ln" style="right:1287px;top:794.5px;color:#4b5059;">19</span>
<span class="a t m cl" style="left:140px;top:794.5px;color:#bcbec4;"> 2. Create a new branch for your feature or fix.</span>
<span class="a t m ln" style="right:1287px;top:838.5px;color:#4b5059;">20</span>
<span class="a t m cl" style="left:140px;top:838.5px;color:#bcbec4;"> 3. Make your changes.</span>
<span class="a t m ln" style="right:1287px;top:882.5px;color:#4b5059;">21</span>
<span class="a t m cl" style="left:140px;top:882.5px;color:#bcbec4;"> 4. Test your changes to ensure they work as expected.</span>
<span class="a t m ln" style="right:1287px;top:926.5px;color:#4b5059;">22</span>
<span class="a t m cl" style="left:140px;top:926.5px;color:#bcbec4;"> 5. Commit your changes and push them to your fork.</span>
<span class="a t m ln" style="right:1287px;top:970.5px;color:#4b5059;">23</span>
<span class="a t m cl" style="left:140px;top:970.5px;color:#bcbec4;"> 6. Open a pull request with a clear description of your changes.</span>
</div>
<div class="a " style="left:725px;top:435px;width:28px;height:28px;background:#3d3223;border-radius:5px;box-sizing:border-box;border:2px solid #f2c55c;"></div>
<span id="t10" class="a t m" style="left:732.5px;top:432.5px;height:34px;line-height:34px;font-size:23px;color:#ffffff;font-weight:700;">3</span>
<svg class="a" style="left:1956px;top:178px;" width="30" height="26" viewBox="0 0 30 26" fill="none"><path d="M4.9 12.8L11 18.5L24.1 6.1" stroke="#679a66" stroke-width="4.2" fill="none" stroke-linejoin="round" stroke-linecap="round"/></svg>
<div class="a " style="left:1976px;top:221px;width:14px;height:400px;background:#3a3c40;border-radius:7px;"></div>
<div class="a " style="left:650px;top:1262px;width:1347px;height:28px;background:#3a3c40;"></div>
<div class="a " style="left:800px;top:1268px;width:1185.5px;height:16px;background:#5c5e61;border-radius:8px;"></div>
<div class="a " style="left:29px;top:1312px;width:16px;height:16px;background:#25324d;border-radius:4px;box-sizing:border-box;border:2px solid #548af7;"></div>
<span id="t11" class="a t s" style="left:53.8px;top:1299.0px;height:40px;line-height:40px;font-size:27px;color:#9da0a8;letter-spacing:-0.174px;">Samples</span>
<svg class="a" style="left:176.5px;top:1309.0px;" width="12" height="19" viewBox="0 0 12 19" fill="none"><path d="M2 2L10 9.5L2 17" stroke="#9da0a8" stroke-width="2" stroke-linecap="round" stroke-linejoin="round"/></svg>
<svg class="a" style="left:207.5px;top:1311.5px;" width="33.0" height="16.0" viewBox="0 0 33 16" fill="none"><path d="M0.4 15.2V0.8H4.6L9.3 9.8L14 0.8H18.2V15.2H14.8V5.9L10.6 13.7H8L3.8 5.9V15.2Z" fill="#548af7"/><path d="M26 1.6V13.6M21 8.8L26 13.9L31 8.8" stroke="#548af7" stroke-width="2.9" stroke-linecap="butt" stroke-linejoin="miter" fill="none"/></svg>
<span id="t12" class="a t s" style="left:247.7px;top:1299.0px;height:40px;line-height:40px;font-size:26.5px;color:#9da0a8;letter-spacing:-0.733px;">README.md</span>
<span id="t13" class="a t s" style="left:1541.4px;top:1298.5px;height:40px;line-height:40px;font-size:27px;color:#9da0a8;letter-spacing:-0.454px;">9:16</span>
<span id="t14" class="a t s" style="left:1629.5px;top:1299.0px;height:39px;line-height:39px;font-size:26px;color:#9da0a8;letter-spacing:-1.044px;">LF</span>
<span id="t15" class="a t s" style="left:1692px;top:1298.5px;height:40px;line-height:40px;font-size:27px;color:#9da0a8;letter-spacing:0.450px;">UTF-8</span>
<span id="t16" class="a t s" style="left:1804px;top:1298.5px;height:40px;line-height:40px;font-size:27px;color:#9da0a8;letter-spacing:0.332px;">4 spaces</span>
<svg class="a" style="left:1950px;top:1303px;" width="32" height="32" viewBox="0 0 32 32" fill="none"><g stroke="#ced0d6" stroke-width="2.2" stroke-linecap="round" fill="none"><rect x="4.2" y="14.2" width="17.6" height="13.8" rx="2.8"/><path d="M18.2 14V11C18.2 8.1 20.4 6.1 23.2 6.1C26 6.1 28 8.1 28 11V12.8"/><path d="M13 19V22.6" stroke-width="2.5"/></g></svg>
<svg class="a" style="left:2011px;top:1304px;" width="32" height="32" viewBox="0 0 32 32" fill="none"><g stroke="#ced0d6" stroke-width="2.2" stroke-linecap="round" fill="none"><circle cx="16" cy="16" r="13"/><path d="M16 9.6V16.2" stroke-width="3.6"/></g><circle cx="16" cy="22" r="2.3" fill="#ced0d6"/></svg>
<svg class="a" style="left:0px;top:0px;" width="2078" height="1352" viewBox="0 0 2078 1352" fill="none"><path fill-rule="evenodd" fill="#000" d="M0 0H2078V1352H0Z M15.5 0H2063.5A14.5 14.5 0 0 1 2078 14.5V1335.5A14.5 14.5 0 0 1 2063.5 1350H15.5A14.5 14.5 0 0 1 1 1335.5V14.5A14.5 14.5 0 0 1 15.5 0Z"/></svg>
<div class="a pop" style="left:1589px;top:332px;width:424px;height:856px;"></div>
<span id="t17" class="a t s" style="left:1699.4px;top:353.0px;height:40px;line-height:40px;font-size:27px;color:#dfe1e5;font-weight:700;letter-spacing:-0.088px;">VCS Operations</span>
<span id="t18" class="a t s" style="left:1629.5px;top:412.4px;height:38px;line-height:38px;font-size:25px;color:#80848c;font-weight:700;letter-spacing:-0.459px;">Git</span>
<div class="a " style="left:1613px;top:452px;width:376px;height:48px;background:#2e436e;border-radius:8px;"></div>
<div class="a " style="left:1613px;top:604px;width:376px;height:2px;background:#43454a;"></div>
<div class="a " style="left:1613px;top:766px;width:376px;height:2px;background:#43454a;"></div>
<div class="a " style="left:1613px;top:1024px;width:376px;height:2px;background:#43454a;"></div>
<svg class="a" style="left:0px;top:0px;pointer-events:none;" width="2078" height="1587" viewBox="0 0 2078 1587" fill="none"><path d="M1695.8 466.9H1698.7V485.7H1695.8V470.5L1690.3999999999999 473.9V470.7Z" fill="#dfe1e5"/></svg>
<span id="t19" class="a t s" style="left:1717.5px;top:456.5px;height:40px;line-height:40px;font-size:27px;color:#dfe1e5;letter-spacing:0.098px;">Commit...</span>
<span id="t20" class="a t s" style="left:1686px;top:504.8px;height:40px;line-height:40px;font-size:27px;color:#7d8189;transform:scaleX(0.931);transform-origin:0 50%;">2</span>
<span id="t21" class="a t s" style="left:1717.5px;top:504.8px;height:40px;line-height:40px;font-size:27px;color:#dfe1e5;letter-spacing:0.014px;">Commit File...</span>
<span id="t22" class="a t s" style="left:1686px;top:552.8px;height:40px;line-height:40px;font-size:27px;color:#7d8189;transform:scaleX(0.931);transform-origin:0 50%;">3</span>
<span id="t23" class="a t s" style="left:1717.5px;top:552.8px;height:40px;line-height:40px;font-size:27px;color:#dfe1e5;letter-spacing:-0.096px;">Rollback...</span>
<span id="t24" class="a t s" style="left:1686px;top:618.5px;height:40px;line-height:40px;font-size:27px;color:#6a6d74;transform:scaleX(0.931);transform-origin:0 50%;">4</span>
<span id="t25" class="a t s" style="left:1717.5px;top:618.5px;height:40px;line-height:40px;font-size:27px;color:#6a6d74;letter-spacing:0.368px;">Show History</span>
<span id="t26" class="a t s" style="left:1686px;top:667.0px;height:40px;line-height:40px;font-size:27px;color:#6a6d74;transform:scaleX(0.931);transform-origin:0 50%;">5</span>
<span id="t27" class="a t s" style="left:1717.5px;top:667.0px;height:40px;line-height:40px;font-size:27px;color:#6a6d74;letter-spacing:0.601px;">Annotate</span>
<span id="t28" class="a t s" style="left:1686px;top:715.0px;height:40px;line-height:40px;font-size:27px;color:#6a6d74;transform:scaleX(0.931);transform-origin:0 50%;">6</span>
<span id="t29" class="a t s" style="left:1717.5px;top:715.0px;height:40px;line-height:40px;font-size:27px;color:#6a6d74;letter-spacing:0.530px;">Show Diff</span>
<span id="t30" class="a t s" style="left:1686px;top:781.4px;height:40px;line-height:40px;font-size:27px;color:#7d8189;transform:scaleX(0.931);transform-origin:0 50%;">7</span>
<span id="t31" class="a t s" style="left:1717.5px;top:781.4px;height:40px;line-height:40px;font-size:27px;color:#dfe1e5;letter-spacing:-0.078px;">Branches...</span>
<span id="t32" class="a t s" style="left:1686px;top:829.0px;height:40px;line-height:40px;font-size:27px;color:#7d8189;transform:scaleX(0.931);transform-origin:0 50%;">8</span>
<span id="t33" class="a t s" style="left:1717.5px;top:829.0px;height:40px;line-height:40px;font-size:27px;color:#dfe1e5;letter-spacing:-0.458px;">Push...</span>
<span id="t34" class="a t s" style="left:1686px;top:877.0px;height:40px;line-height:40px;font-size:27px;color:#7d8189;transform:scaleX(0.931);transform-origin:0 50%;">9</span>
<span id="t35" class="a t s" style="left:1717.5px;top:877.0px;height:40px;line-height:40px;font-size:27px;color:#dfe1e5;letter-spacing:-0.056px;">Stash Changes...</span>
<span id="t36" class="a t s" style="left:1686px;top:925.0px;height:40px;line-height:40px;font-size:27px;color:#7d8189;transform:scaleX(0.931);transform-origin:0 50%;">0</span>
<span id="t37" class="a t s" style="left:1717.5px;top:925.0px;height:40px;line-height:40px;font-size:27px;color:#dfe1e5;letter-spacing:0.033px;">Unstash Changes...</span>
<span id="t38" class="a t s" style="left:1717.5px;top:973.0px;height:40px;line-height:40px;font-size:27px;color:#dfe1e5;letter-spacing:0.080px;">Add to VCS</span>
<span id="t39" class="a t s" style="left:1717.5px;top:1081.4px;height:40px;line-height:40px;font-size:27px;color:#dfe1e5;letter-spacing:0.338px;">Show History...</span>
<span id="t40" class="a t s" style="left:1717.5px;top:1129.3px;height:40px;line-height:40px;font-size:27px;color:#dfe1e5;letter-spacing:-0.074px;">Put Label...</span>
<span id="t41" class="a t s" style="left:1629.5px;top:1036.6px;height:38px;line-height:38px;font-size:25px;color:#80848c;font-weight:700;letter-spacing:-0.423px;">Local History</span>
<svg class="a" style="left:1923.5px;top:466.3px;" width="20.4" height="20.4" viewBox="0 0 20.4 20.4" fill="none"><path d="M7.2 7.2H13.2V13.2H7.2Z M7.2 7.2V4.15A3.05 3.05 0 1 0 4.15 7.2H7.2 M13.2 7.2H16.25A3.05 3.05 0 1 0 13.2 4.15V7.2 M13.2 13.2V16.25A3.05 3.05 0 1 0 16.25 13.2H13.2 M7.2 13.2H4.15A3.05 3.05 0 1 0 7.2 16.25V13.2" stroke="#c3c6cd" stroke-width="2.1" fill="none"/></svg>
<span id="t42" class="a t s" style="left:1948px;top:456.5px;height:40px;line-height:40px;font-size:27px;color:#c3c6cd;transform:scaleX(0.888);transform-origin:0 50%;">K</span>
<svg class="a" style="left:1896.6px;top:561.4px;" width="25" height="22" viewBox="0 0 25 22" fill="none"><path d="M1.2 2.6H8.2L16.2 19.4H24M14 2.6H24" transform="translate(0,0)" stroke="#80848d" stroke-width="2.1" fill="none"/></svg>
<svg class="a" style="left:1925px;top:562.1999999999999px;" width="20.4" height="20.4" viewBox="0 0 20.4 20.4" fill="none"><path d="M7.2 7.2H13.2V13.2H7.2Z M7.2 7.2V4.15A3.05 3.05 0 1 0 4.15 7.2H7.2 M13.2 7.2H16.25A3.05 3.05 0 1 0 13.2 4.15V7.2 M13.2 13.2V16.25A3.05 3.05 0 1 0 16.25 13.2H13.2 M7.2 13.2H4.15A3.05 3.05 0 1 0 7.2 16.25V13.2" stroke="#80848d" stroke-width="2.1" fill="none"/></svg>
<span id="t43" class="a t s" style="left:1949.8px;top:552.4px;height:40px;line-height:40px;font-size:27px;color:#80848d;transform:scaleX(0.800);transform-origin:0 50%;">Z</span>
<svg class="a" style="left:1897px;top:836.3px;" width="24" height="24" viewBox="0 0 24 24" fill="none"><path d="M12 2.8L21.5 13.2H16.6V22.3H7.4V13.2H2.5Z" stroke="#80848d" stroke-width="2.1" stroke-linejoin="miter" fill="none"/></svg>
<svg class="a" style="left:1925px;top:838.5999999999999px;" width="20.4" height="20.4" viewBox="0 0 20.4 20.4" fill="none"><path d="M7.2 7.2H13.2V13.2H7.2Z M7.2 7.2V4.15A3.05 3.05 0 1 0 4.15 7.2H7.2 M13.2 7.2H16.25A3.05 3.05 0 1 0 13.2 4.15V7.2 M13.2 13.2V16.25A3.05 3.05 0 1 0 16.25 13.2H13.2 M7.2 13.2H4.15A3.05 3.05 0 1 0 7.2 16.25V13.2" stroke="#80848d" stroke-width="2.1" fill="none"/></svg>
<span id="t44" class="a t s" style="left:1949px;top:828.8px;height:40px;line-height:40px;font-size:27px;color:#80848d;transform:scaleX(0.833);transform-origin:0 50%;">K</span>
<svg class="a" style="left:1896.6px;top:982px;" width="25" height="22" viewBox="0 0 25 22" fill="none"><path d="M1.2 2.6H8.2L16.2 19.4H24M14 2.6H24" transform="translate(0,0)" stroke="#80848d" stroke-width="2.1" fill="none"/></svg>
<svg class="a" style="left:1925px;top:982.8px;" width="20.4" height="20.4" viewBox="0 0 20.4 20.4" fill="none"><path d="M7.2 7.2H13.2V13.2H7.2Z M7.2 7.2V4.15A3.05 3.05 0 1 0 4.15 7.2H7.2 M13.2 7.2H16.25A3.05 3.05 0 1 0 13.2 4.15V7.2 M13.2 13.2V16.25A3.05 3.05 0 1 0 16.25 13.2H13.2 M7.2 13.2H4.15A3.05 3.05 0 1 0 7.2 16.25V13.2" stroke="#80848d" stroke-width="2.1" fill="none"/></svg>
<span id="t45" class="a t s" style="left:1947.5px;top:973.0px;height:40px;line-height:40px;font-size:27px;color:#80848d;transform:scaleX(0.938);transform-origin:0 50%;">A</span>
<svg class="a" style="left:1627.4px;top:465px;" width="36" height="22" viewBox="0 0 36 22" fill="none"><g stroke="#ced0d6" stroke-width="2.1" stroke-linecap="round" fill="none"><circle cx="17.5" cy="11" r="4.6"/><path d="M2.5 11H12.5M22.5 11H32.5"/></g></svg>
<svg class="a" style="left:1629px;top:555px;" width="34" height="32" viewBox="0 0 34 32" fill="none"><g stroke="#ced0d6" stroke-width="2.1" stroke-linecap="round" stroke-linejoin="round" fill="none"><path d="M11.5 4.2L4 11.2L11.5 18.2"/><path d="M4.4 11.2H21.2C25.8 11.2 29 14.4 29 19C29 23.6 25.8 26.8 21.2 26.8H11"/></g></svg>
<svg class="a" style="left:1629px;top:622px;" width="32" height="32" viewBox="0 0 32 32" fill="none"><g stroke="#5a5d63" stroke-width="2.1" stroke-linecap="round" stroke-linejoin="round" fill="none"><circle cx="16" cy="16" r="13"/><path d="M16 8.5V16.6L20.6 19.6"/></g></svg>
<svg class="a" style="left:1627px;top:718px;" width="36" height="34" viewBox="0 0 36 34" fill="none"><g stroke="#5a5d63" stroke-width="2.1" stroke-linecap="round" stroke-linejoin="round" fill="none"><path d="M33 9.2H17.5M23.6 3.4L17.2 9.2L23.6 15"/><path d="M3 23.2H18.5M12.4 17.4L18.8 23.2L12.4 29"/></g></svg>
<svg class="a" style="left:1632.8px;top:786.8px;" width="24.0" height="28.0" viewBox="0 0 24 28" fill="none"><g stroke="#ced0d6" stroke-width="2.1" stroke-linecap="round" fill="none"><circle cx="5.2" cy="4.9" r="3.9"/><circle cx="17.3" cy="8.9" r="3.5"/><path d="M5.2 9V26.4"/><path d="M17.3 12.6V14.6C17.3 17.8 15.6 19.4 12.3 19.4H5.4"/></g></svg>
<svg class="a" style="left:1631px;top:835px;" width="28" height="28" viewBox="0 0 28 28" fill="none"><g stroke="#ced0d6" stroke-width="2.1" stroke-linecap="round" stroke-linejoin="round" fill="none"><path d="M4.6 22.3L23.1 4.4M8.5 4.4H23.1V19.3"/></g></svg>
<div class="a pop" style="left:500px;top:581px;width:530px;height:948px;"></div>
<div class="a " style="left:510px;top:595px;width:510px;height:48px;background:#2e436e;border-radius:8px;"></div>
<div class="a " style="left:522px;top:653px;width:486px;height:2px;background:#43454a;"></div>
<div class="a " style="left:522px;top:827px;width:486px;height:2px;background:#43454a;"></div>
<div class="a " style="left:522px;top:897px;width:486px;height:2px;background:#43454a;"></div>
<div class="a " style="left:522px;top:967px;width:486px;height:2px;background:#43454a;"></div>
<div class="a " style="left:522px;top:1089px;width:486px;height:2px;background:#43454a;"></div>
<div class="a " style="left:522px;top:1211px;width:486px;height:2px;background:#43454a;"></div>
<div class="a " style="left:522px;top:1281px;width:486px;height:2px;background:#43454a;"></div>
<div class="a " style="left:522px;top:1403px;width:486px;height:2px;background:#43454a;"></div>
<span id="t46" class="a t s" style="left:566.6px;top:600.0px;height:40px;line-height:40px;font-size:27px;color:#dfe1e5;letter-spacing:0.502px;">Show Context Actions</span>
<span id="t47" class="a t s" style="left:566.6px;top:670.0px;height:40px;line-height:40px;font-size:27px;color:#dfe1e5;letter-spacing:-0.087px;">Paste</span>
<span id="t48" class="a t s" style="left:566.6px;top:722.0px;height:40px;line-height:40px;font-size:27px;color:#dfe1e5;letter-spacing:0.187px;">Copy / Paste Special</span>
<span id="t49" class="a t s" style="left:566.6px;top:774.0px;height:40px;line-height:40px;font-size:27px;color:#dfe1e5;letter-spacing:0.247px;">Column Selection Mode</span>
<span id="t50" class="a t s" style="left:566.6px;top:844.0px;height:40px;line-height:40px;font-size:27px;color:#dfe1e5;letter-spacing:0.021px;">Insert...</span>
<span id="t51" class="a t s" style="left:566.6px;top:914.0px;height:40px;line-height:40px;font-size:27px;color:#dfe1e5;letter-spacing:0.509px;">Go To</span>
<span id="t52" class="a t s" style="left:566.6px;top:984.0px;height:40px;line-height:40px;font-size:27px;color:#dfe1e5;letter-spacing:0.106px;">Folding</span>
<span id="t53" class="a t s" style="left:566.6px;top:1036.0px;height:40px;line-height:40px;font-size:27px;color:#dfe1e5;letter-spacing:0.106px;">Analyze</span>
<span id="t54" class="a t s" style="left:566.6px;top:1106.0px;height:40px;line-height:40px;font-size:27px;color:#dfe1e5;letter-spacing:0.393px;">Refactor</span>
<span id="t55" class="a t s" style="left:566.6px;top:1158.0px;height:40px;line-height:40px;font-size:27px;color:#dfe1e5;letter-spacing:-0.089px;">Generate...</span>
<span id="t56" class="a t s" style="left:566.6px;top:1228.0px;height:40px;line-height:40px;font-size:27px;color:#dfe1e5;letter-spacing:-0.230px;">Open In</span>
<span id="t57" class="a t s" style="left:566.6px;top:1298.0px;height:40px;line-height:40px;font-size:27px;color:#dfe1e5;letter-spacing:0.345px;">Local History</span>
<span id="t58" class="a t s" style="left:566.6px;top:1350.0px;height:40px;line-height:40px;font-size:27px;color:#dfe1e5;letter-spacing:-0.258px;">Git</span>
<span id="t59" class="a t s" style="left:566.6px;top:1420.0px;height:40px;line-height:40px;font-size:27px;color:#dfe1e5;letter-spacing:0.384px;">Compare with Clipboard</span>
<span id="t60" class="a t s" style="left:566.6px;top:1472.0px;height:40px;line-height:40px;font-size:27px;color:#dfe1e5;letter-spacing:-0.090px;">Diagrams</span>
<svg class="a" style="left:986.0px;top:733.9px;" width="11.1" height="18.2" viewBox="0 0 11.1 18.2" fill="none"><path d="M2 2L9.1 9.1L2 16.2" stroke="#b9bcc3" stroke-width="2.2" stroke-linecap="round" stroke-linejoin="round"/></svg>
<svg class="a" style="left:986.0px;top:925.9px;" width="11.1" height="18.2" viewBox="0 0 11.1 18.2" fill="none"><path d="M2 2L9.1 9.1L2 16.2" stroke="#b9bcc3" stroke-width="2.2" stroke-linecap="round" stroke-linejoin="round"/></svg>
<svg class="a" style="left:986.0px;top:995.9px;" width="11.1" height="18.2" viewBox="0 0 11.1 18.2" fill="none"><path d="M2 2L9.1 9.1L2 16.2" stroke="#b9bcc3" stroke-width="2.2" stroke-linecap="round" stroke-linejoin="round"/></svg>
<svg class="a" style="left:986.0px;top:1047.9px;" width="11.1" height="18.2" viewBox="0 0 11.1 18.2" fill="none"><path d="M2 2L9.1 9.1L2 16.2" stroke="#b9bcc3" stroke-width="2.2" stroke-linecap="round" stroke-linejoin="round"/></svg>
<svg class="a" style="left:986.0px;top:1117.9px;" width="11.1" height="18.2" viewBox="0 0 11.1 18.2" fill="none"><path d="M2 2L9.1 9.1L2 16.2" stroke="#b9bcc3" stroke-width="2.2" stroke-linecap="round" stroke-linejoin="round"/></svg>
<svg class="a" style="left:986.0px;top:1239.9px;" width="11.1" height="18.2" viewBox="0 0 11.1 18.2" fill="none"><path d="M2 2L9.1 9.1L2 16.2" stroke="#b9bcc3" stroke-width="2.2" stroke-linecap="round" stroke-linejoin="round"/></svg>
<svg class="a" style="left:986.0px;top:1309.9px;" width="11.1" height="18.2" viewBox="0 0 11.1 18.2" fill="none"><path d="M2 2L9.1 9.1L2 16.2" stroke="#b9bcc3" stroke-width="2.2" stroke-linecap="round" stroke-linejoin="round"/></svg>
<svg class="a" style="left:986.0px;top:1361.9px;" width="11.1" height="18.2" viewBox="0 0 11.1 18.2" fill="none"><path d="M2 2L9.1 9.1L2 16.2" stroke="#b9bcc3" stroke-width="2.2" stroke-linecap="round" stroke-linejoin="round"/></svg>
<svg class="a" style="left:986.0px;top:1483.9px;" width="11.1" height="18.2" viewBox="0 0 11.1 18.2" fill="none"><path d="M2 2L9.1 9.1L2 16.2" stroke="#b9bcc3" stroke-width="2.2" stroke-linecap="round" stroke-linejoin="round"/></svg>
<svg class="a" style="left:957px;top:608.2px;" width="25" height="22" viewBox="0 0 25 22" fill="none"><path d="M1.2 2.6H8.2L16.2 19.4H24M14 2.6H24" transform="translate(0,0)" stroke="#dfe1e5" stroke-width="2.6" fill="none"/></svg>
<svg class="a" style="left:982.6px;top:607.7px;" width="24" height="24" viewBox="0 0 24 24" fill="none"><path d="M14.5 2.9H21V12.8H8" stroke="#dfe1e5" stroke-width="2.8" fill="none"/><path d="M1.6 12.8L8.2 7V18.6Z" fill="#dfe1e5"/></svg>
<svg class="a" style="left:966.6px;top:680.3px;" width="20.4" height="20.4" viewBox="0 0 20.4 20.4" fill="none"><path d="M7.2 7.2H13.2V13.2H7.2Z M7.2 7.2V4.15A3.05 3.05 0 1 0 4.15 7.2H7.2 M13.2 7.2H16.25A3.05 3.05 0 1 0 13.2 4.15V7.2 M13.2 13.2V16.25A3.05 3.05 0 1 0 16.25 13.2H13.2 M7.2 13.2H4.15A3.05 3.05 0 1 0 7.2 16.25V13.2" stroke="#80848d" stroke-width="2.1" fill="none"/></svg>
<span id="t61" class="a t s" style="left:990px;top:670.5px;height:40px;line-height:40px;font-size:27px;color:#80848d;transform:scaleX(0.944);transform-origin:0 50%;">V</span>
<svg class="a" style="left:941.3px;top:781.2px;" width="24" height="24" viewBox="0 0 24 24" fill="none"><path d="M12 2.8L21.5 13.2H16.6V22.3H7.4V13.2H2.5Z" stroke="#80848d" stroke-width="2.1" stroke-linejoin="miter" fill="none"/></svg>
<svg class="a" style="left:969.4px;top:783.1999999999999px;" width="20.4" height="20.4" viewBox="0 0 20.4 20.4" fill="none"><path d="M7.2 7.2H13.2V13.2H7.2Z M7.2 7.2V4.15A3.05 3.05 0 1 0 4.15 7.2H7.2 M13.2 7.2H16.25A3.05 3.05 0 1 0 13.2 4.15V7.2 M13.2 13.2V16.25A3.05 3.05 0 1 0 16.25 13.2H13.2 M7.2 13.2H4.15A3.05 3.05 0 1 0 7.2 16.25V13.2" stroke="#80848d" stroke-width="2.1" fill="none"/></svg>
<span id="t62" class="a t s" style="left:994px;top:773.4px;height:40px;line-height:40px;font-size:27px;color:#80848d;transform:scaleX(0.898);transform-origin:0 50%;">8</span>
<svg class="a" style="left:964.5px;top:854.3px;" width="20.4" height="20.4" viewBox="0 0 20.4 20.4" fill="none"><path d="M7.2 7.2H13.2V13.2H7.2Z M7.2 7.2V4.15A3.05 3.05 0 1 0 4.15 7.2H7.2 M13.2 7.2H16.25A3.05 3.05 0 1 0 13.2 4.15V7.2 M13.2 13.2V16.25A3.05 3.05 0 1 0 16.25 13.2H13.2 M7.2 13.2H4.15A3.05 3.05 0 1 0 7.2 16.25V13.2" stroke="#80848d" stroke-width="2.1" fill="none"/></svg>
<span id="t63" class="a t s" style="left:989.5px;top:844.5px;height:40px;line-height:40px;font-size:27px;color:#80848d;transform:scaleX(0.897);transform-origin:0 50%;">N</span>
<svg class="a" style="left:964.5px;top:1168.3px;" width="20.4" height="20.4" viewBox="0 0 20.4 20.4" fill="none"><path d="M7.2 7.2H13.2V13.2H7.2Z M7.2 7.2V4.15A3.05 3.05 0 1 0 4.15 7.2H7.2 M13.2 7.2H16.25A3.05 3.05 0 1 0 13.2 4.15V7.2 M13.2 13.2V16.25A3.05 3.05 0 1 0 16.25 13.2H13.2 M7.2 13.2H4.15A3.05 3.05 0 1 0 7.2 16.25V13.2" stroke="#80848d" stroke-width="2.1" fill="none"/></svg>
<span id="t64" class="a t s" style="left:989.5px;top:1158.5px;height:40px;line-height:40px;font-size:27px;color:#80848d;transform:scaleX(0.897);transform-origin:0 50%;">N</span>
<svg class="a" style="left:526px;top:602px;" width="28" height="34" viewBox="0 0 28 34" fill="none"><g stroke="#ced0d6" stroke-width="2.1" stroke-linecap="round" fill="none"><path d="M9.3 22.1V19.3C6.9 17.6 5.3 14.8 5.3 11.7C5.3 6.9 9.2 3 14 3C18.8 3 22.7 6.9 22.7 11.7C22.7 14.8 21.1 17.6 18.7 19.3V22.1Z" stroke-linejoin="round"/><path d="M9.8 26H18.2M11 29.9C12.8 30.5 15.2 30.5 17 29.9"/></g></svg>
<svg class="a" style="left:525px;top:673px;" width="30" height="32" viewBox="0 0 30 32" fill="none"><g stroke="#ced0d6" stroke-width="2.1" stroke-linecap="round" fill="none"><rect x="4.05" y="5.4" width="21.9" height="23.3" rx="3.4"/><rect x="10.7" y="3.0" width="8.6" height="3.8" rx="1.9" fill="#2b2d30"/><path d="M10.1 13.1H19.9M10.1 16.9H19.9M10.1 20.9H19.9" stroke-width="2.3"/></g></svg>
<svg class="a" style="left:525px;top:1423px;" width="34" height="34" viewBox="0 0 34 34" fill="none"><g stroke="#ced0d6" stroke-width="2.1" stroke-linecap="round" fill="none"><path d="M26 13.4V8.4C26 6.6 24.7 5.2 23 5.2H7C5.3 5.2 4 6.6 4 8.4V25.6C4 27.4 5.2 28.7 7 29"/><rect x="10.6" y="2.8" width="9.1" height="4.3" rx="2.1" fill="#2b2d30"/><path d="M10 12.9H20M10 16.8H17M10 20.9H13.4" stroke-width="2.2"/></g><g stroke="#548af7" stroke-width="2.2" stroke-linecap="round" stroke-linejoin="round" fill="none"><path d="M30.2 19H20.2M24.6 14.8L19.9 19L24.6 23.2"/><path d="M9.8 26.9H20M15.6 22.8L20.3 26.9L15.6 31"/></g></svg>
<div class="a bd s" style="left:422.6px;top:1293.9px;"></div>
<svg class="a" style="left:0px;top:0px;pointer-events:none;" width="2078" height="1587" viewBox="0 0 2078 1587" fill="none"><path d="M447.10 1309.00H450.70V1332.20H447.10V1316.40H441.40V1313.20C444.50 1313.00 446.50 1311.60 447.10 1309.00Z" fill="#000"/></svg>
<div class="a bd s" style="left:265.1px;top:100.4px;">2</div>
<div class="a bd s" style="left:1295.1px;top:313.4px;">3</div>
<div class="a bd s" style="left:1893.6px;top:667.4px;">4</div>
<div class="a bd s" style="left:799.6px;top:1004.4000000000001px;">5</div>
<div class="a bd s" style="left:1359.6px;top:1293.4px;">6</div>
<div class="a bd s" style="left:15.100000000000001px;top:513.9px;">7</div>
<div class="a bd s" style="left:629.6px;top:16.4px;">8</div>
<div class="a bd s" style="left:678.6px;top:337.4px;">9</div>
</div>
</body></html>
